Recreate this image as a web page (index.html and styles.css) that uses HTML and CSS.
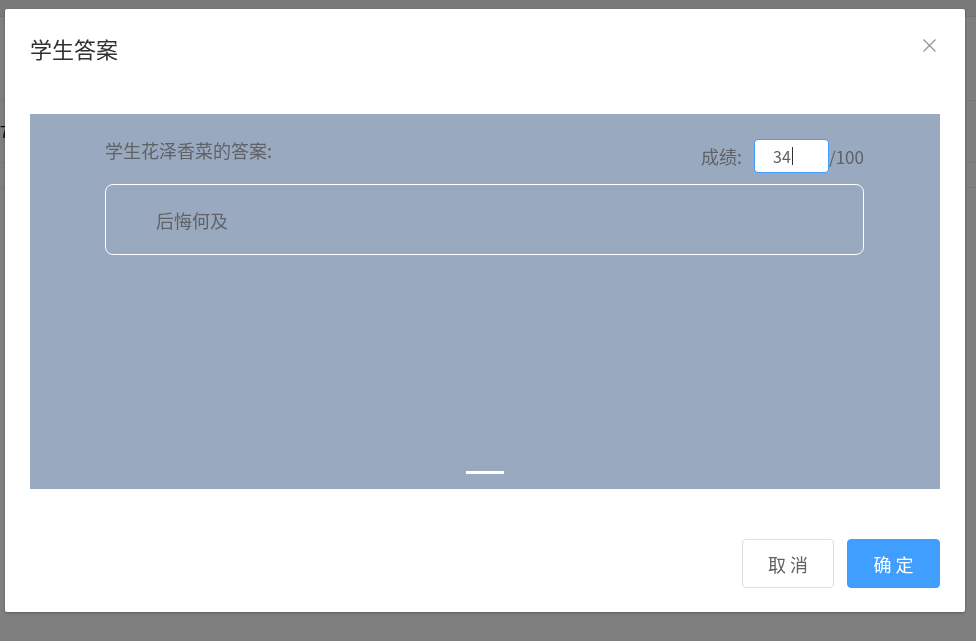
FILE: index.html
```html
<!DOCTYPE html>
<html lang="zh-CN">
<head>
<meta charset="utf-8">
<title>学生答案</title>
<link rel="stylesheet" href="styles.css">
</head>
<body>
<div class="page">
  <div class="page-top"></div>
  <div class="page-row r1"></div>
  <div class="page-row r2"><span class="page-cell">7</span></div>
  <div class="page-row r3"></div>
</div>
<div class="overlay">
  <div class="dialog">
    <div class="dialog-header">
      <span class="dialog-title">学生答案</span>
      <button class="dialog-close" aria-label="关闭">
        <svg width="13" height="13" viewBox="0 0 13 13"><path d="M0.5 0.5 L12.5 12.5 M12.5 0.5 L0.5 12.5" stroke="#909399" stroke-width="1.2" fill="none"/></svg>
      </button>
    </div>
    <div class="dialog-body">
      <div class="carousel">
        <div class="answer-head">
          <span class="answer-label">学生花泽香菜的答案:</span>
          <div class="score">
            <span class="score-label">成绩:</span>
            <div class="score-input"><span class="score-value">34</span><span class="caret"></span></div>
            <span class="score-total">/100</span>
          </div>
        </div>
        <div class="answer-box">后悔何及</div>
        <div class="indicator"></div>
      </div>
    </div>
    <div class="dialog-footer">
      <button class="btn btn-default">取消</button>
      <button class="btn btn-primary">确定</button>
    </div>
  </div>
</div>
</body>
</html>
```

FILE: styles.css
```css
html, body {
  margin: 0;
  padding: 0;
  height: 100%;
}
body {
  font-family: "Noto Sans CJK SC", "Noto Sans", sans-serif;
  background: #fff;
  overflow: hidden;
}
.page {
  height: 641px;
}
.page-top {
  height: 16px;
  background: #f2f2f2;
  border-bottom: 1px solid #e6e6e6;
}
.page-row {
  border-bottom: 1px solid #ebeef5;
  box-sizing: border-box;
}
.r1 { height: 84px; }
.r2 { height: 62px; }
.r3 { height: 25px; }
.page-cell {
  display: block;
  padding-top: 18px;
  padding-left: 0;
  font-size: 16px;
  color: #000;
}
.overlay {
  position: fixed;
  inset: 0;
  background: rgba(0, 0, 0, 0.5);
  padding: 9px 0 0 5px;
}
.dialog {
  width: 960px;
  height: 603px;
  background: #fff;
  border-radius: 2px;
  box-shadow: 0 1px 3px rgba(0, 0, 0, 0.3);
  box-sizing: border-box;
  display: flex;
  flex-direction: column;
  position: relative;
}
.dialog-header {
  padding: 27px 25px 0;
  height: 105px;
  box-sizing: border-box;
}
.dialog-title {
  font-size: 22px;
  line-height: 24px;
  color: #303133;
}
.dialog-close {
  position: absolute;
  top: 30px;
  right: 29px;
  border: 0;
  background: none;
  padding: 0;
  width: 13px;
  height: 13px;
  cursor: pointer;
}
.dialog-close svg { display: block; }
.dialog-body {
  padding: 0 25px;
}
.carousel {
  height: 375px;
  background: #99a9bf;
  box-sizing: border-box;
  padding: 25px 76px 15px 75px;
  display: flex;
  flex-direction: column;
}
.answer-head {
  display: flex;
  justify-content: space-between;
  align-items: flex-start;
}
.answer-label {
  font-size: 18px;
  line-height: 22px;
  color: #606266;
}
.score {
  display: flex;
  align-items: center;
  color: #606266;
  font-size: 18px;
}
.score-label {
  margin-right: 12px;
}
.score-input {
  width: 75px;
  height: 34px;
  box-sizing: border-box;
  border: 1px solid #409eff;
  border-radius: 4px;
  background: #fff;
  padding-left: 18px;
  display: flex;
  align-items: center;
  font-size: 16px;
  color: #606266;
}
.caret {
  width: 1px;
  height: 18px;
  background: #303133;
  margin-left: 1px;
}
.score-total {
  font-size: 17px;
}
.answer-box {
  margin-top: 11px;
  height: 71px;
  box-sizing: border-box;
  border: 1px solid #fff;
  border-radius: 8px;
  padding-left: 50px;
  display: flex;
  align-items: center;
  font-size: 18px;
  color: #606266;
}
.indicator {
  margin-top: auto;
  align-self: center;
  width: 38px;
  height: 3px;
  background: #fff;
}
.dialog-footer {
  margin-top: 50px;
  padding: 0 25px;
  display: flex;
  justify-content: flex-end;
  gap: 13px;
}
.btn {
  height: 49px;
  border-radius: 4px;
  font-family: "Noto Sans CJK SC", "Noto Sans", sans-serif;
  font-size: 18px;
  letter-spacing: 4px;
  padding: 0 0 0 4px;
  cursor: pointer;
  box-sizing: border-box;
}
.btn-default {
  width: 92px;
  background: #fff;
  border: 1px solid #dcdfe6;
  color: #606266;
}
.btn-primary {
  width: 93px;
  background: #409eff;
  border: 1px solid #409eff;
  color: #fff;
}
```
